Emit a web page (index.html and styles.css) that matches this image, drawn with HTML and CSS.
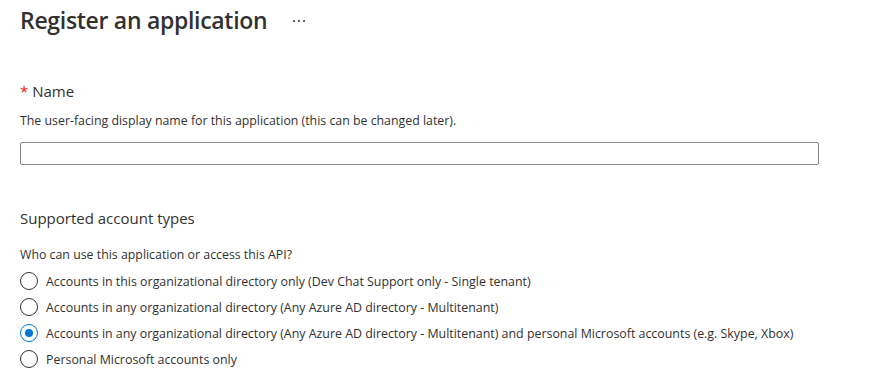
FILE: index.html
```html
<!DOCTYPE html>
<html>
<head>
<meta charset="utf-8">
<link rel="stylesheet" href="styles.css">
</head>
<body>
<div class="page">
  <div class="header">
    <h1 class="title">Register an application</h1>
    <span class="more"><i></i><i></i><i></i></span>
  </div>
  <section class="section name-section">
    <div class="label"><span class="req">*</span> Name</div>
    <div class="desc">The user-facing display name for this application (this can be changed later).</div>
    <input class="textbox" type="text">
  </section>
  <section class="section acct-section">
    <div class="label">Supported account types</div>
    <div class="desc">Who can use this application or access this API?</div>
    <div class="radios">
      <div class="radio"><span class="circle"></span><span class="rtext">Accounts in this organizational directory only (Dev Chat Support only - Single tenant)</span></div>
      <div class="radio"><span class="circle"></span><span class="rtext">Accounts in any organizational directory (Any Azure AD directory - Multitenant)</span></div>
      <div class="radio"><span class="circle checked"></span><span class="rtext">Accounts in any organizational directory (Any Azure AD directory - Multitenant) and personal Microsoft accounts (e.g. Skype, Xbox)</span></div>
      <div class="radio"><span class="circle"></span><span class="rtext">Personal Microsoft accounts only</span></div>
    </div>
  </section>
</div>
</body>
</html>
```
FILE: styles.css
```css
html, body {
  margin: 0;
  padding: 0;
  background: #ffffff;
}
body {
  font-family: "Open Sans", "Noto Sans", sans-serif;
  color: #323130;
}
.page {
  padding: 0 20px;
  width: 799px;
}
.header {
  display: flex;
  align-items: center;
  height: 40px;
  gap: 26px;
}
.title {
  margin: 0;
  font-size: 23px;
  font-weight: 600;
  color: #323130;
  letter-spacing: -0.3px;
}
.more {
  display: flex;
  gap: 3px;
  align-items: center;
  margin-top: 1px;
}
.more i {
  display: block;
  width: 2px;
  height: 2px;
  background: #605e5c;
}
.label {
  font-size: 15px;
  line-height: 20px;
  color: #323130;
}
.req {
  color: #e81123;
}
.desc {
  font-size: 12.35px;
  line-height: 16px;
  color: #323130;
}
.name-section {
  margin-top: 41px;
}
.name-section .desc {
  margin-top: 12px;
}
.textbox {
  display: block;
  box-sizing: border-box;
  width: 799px;
  height: 23px;
  margin: 13px 0 0 0;
  border: 1px solid #8a8886;
  border-radius: 2px;
  padding: 0 8px;
  outline: none;
}
.acct-section {
  margin-top: 43px;
}
.acct-section .desc {
  margin-top: 19px;
}
.radios {
  margin-top: 5px;
  display: flex;
  flex-direction: column;
}
.radio {
  display: flex;
  align-items: center;
  height: 26px;
  gap: 8px;
}
.circle {
  box-sizing: border-box;
  width: 18px;
  height: 18px;
  border: 1px solid #323130;
  border-radius: 50%;
  display: flex;
  align-items: center;
  justify-content: center;
  flex: none;
}
.circle.checked {
  border-color: #0078d4;
}
.circle.checked::after {
  content: "";
  width: 8px;
  height: 8px;
  border-radius: 50%;
  background: #0078d4;
}
.rtext {
  font-size: 12.4px;
  color: #323130;
  white-space: nowrap;
}
```
